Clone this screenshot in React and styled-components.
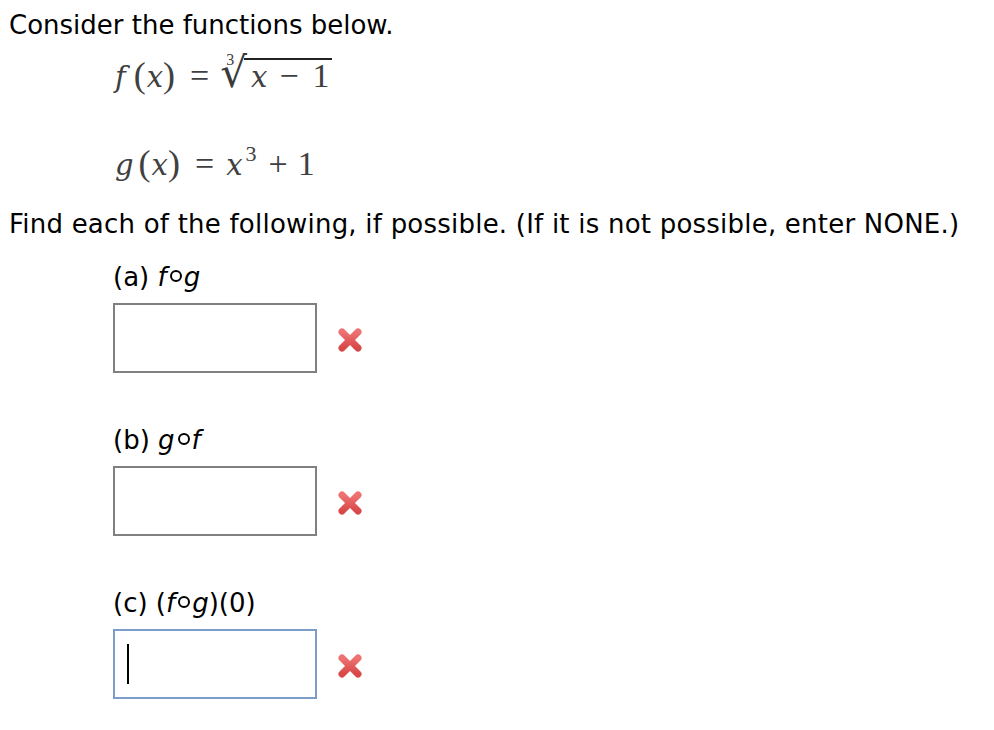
import React from "react";
import styled, { createGlobalStyle } from "styled-components";

const Global = createGlobalStyle`
  html, body { margin: 0; padding: 0; background: #fff; }
  body { font-family: "DejaVu Sans", Verdana, sans-serif; color: #000; }
`;

const Page = styled.div`
  padding: 8px 0 0 9px;
  font-size: 26px;
  line-height: 34px;
`;

const Para = styled.div`
  margin: 0;
`;

const MathBlock = styled.div`
  padding-left: 106px;
  margin-top: 13px;
  display: flex;
  flex-direction: column;
  gap: 50px;
  font-family: "Liberation Serif", "Times New Roman", serif;
  font-size: 34px;
  color: #404040;
  line-height: 36px;
`;

const Eq = styled.div`
  display: flex;
  align-items: baseline;
  white-space: pre;
`;

const I = styled.span`
  font-family: "DejaVu Serif", serif;
  font-style: italic;
  font-size: 29px;
`;

const Paren = styled.span`
  font-size: 36px;
  margin-left: ${(p) => p.$ml || 0}px;
  margin-right: 1px;
`;

const Op = styled.span`
  margin: 0 ${(p) => p.$r || 10}px 0 14px;
`;

const Root = styled.span`
  display: inline-flex;
  align-items: baseline;
  position: relative;
`;

const RootIndex = styled.span`
  position: absolute;
  left: 6px;
  top: -3px;
  font-size: 16px;
  line-height: 16px;
`;

const Radical = styled.span`
  font-family: "DejaVu Serif", serif;
  font-size: 42px;
  color: #3a3a3a;
  margin-right: -3px;
`;

const Radicand = styled.span`
  border-top: 2px solid #222;
  padding: 0 2px 0 7px;
  line-height: 31px;
`;

const Minus = styled.span`
  margin: 0 ${(p) => p.$r || 12}px 0 ${(p) => p.$l || 10}px;
`;

const Sup = styled.span`
  font-size: 22px;
  line-height: 0;
  position: relative;
  top: -14px;
  margin: 0 12px 0 3px;
`;

const Instructions = styled.div`
  margin-top: 24px;
  letter-spacing: 0.22px;
`;

const Parts = styled.div`
  padding-left: 104px;
  margin-top: 19px;
  display: flex;
  flex-direction: column;
  gap: 50px;
`;

const Part = styled.div`
  display: flex;
  flex-direction: column;
  gap: 9px;
`;

const Label = styled.div`
  line-height: 34px;
`;

const Fn = styled.span`
  font-style: italic;
`;

const Ring = styled.span`
  display: inline-block;
  width: 8px;
  height: 8px;
  border: 2.5px solid #000;
  border-radius: 50%;
  margin: 0 2px 0 3px;
  position: relative;
  top: -4px;
`;

const Row = styled.div`
  display: flex;
  align-items: center;
  gap: 19px;
`;

const Box = styled.div`
  box-sizing: border-box;
  width: 204px;
  height: 70px;
  border: 2px solid ${(p) => (p.$focused ? "#7d9dc9" : "#808080")};
  background: #fff;
  display: flex;
  align-items: center;
  padding-left: 12px;
`;

const Caret = styled.span`
  display: block;
  width: 2px;
  height: 40px;
  background: #000;
`;

const Cross = () => (
  <svg width="28" height="28" viewBox="0 0 28 28" style={{ marginTop: 4 }}>
    <defs>
      <linearGradient id="xg" x1="0" y1="0" x2="0" y2="1">
        <stop offset="0" stopColor="#ee7272" />
        <stop offset="1" stopColor="#d84848" />
      </linearGradient>
    </defs>
    <g stroke="url(#xg)" strokeWidth="7" strokeLinecap="round">
      <line x1="6" y1="6" x2="22" y2="22" />
      <line x1="22" y1="6" x2="6" y2="22" />
    </g>
  </svg>
);

const Compose = ({ a, b }) => (
  <Fn>
    {a}
    <Ring aria-label="∘" />
    {b}
  </Fn>
);

export default function App() {
  return (
    <>
      <Global />
      <Page>
        <Para>Consider the functions below.</Para>
        <MathBlock>
          <Eq>
            <I>f</I>
            <Paren $ml={8}>(</Paren>
            <I>x</I>
            <Paren>)</Paren>
            <Op $r={11}>=</Op>
            <Root>
              <RootIndex>3</RootIndex>
              <Radical>√</Radical>
              <Radicand>
                <I>x</I>
                <Minus $l={12} $r={14}>−</Minus>1
              </Radicand>
            </Root>
          </Eq>
          <Eq>
            <I>g</I>
            <Paren $ml={5}>(</Paren>
            <I>x</I>
            <Paren>)</Paren>
            <Op $r={12}>=</Op>
            <I>x</I>
            <Sup>3</Sup>+<Minus>1</Minus>
          </Eq>
        </MathBlock>
        <Instructions>
          Find each of the following, if possible. (If it is not possible, enter NONE.)
        </Instructions>
        <Parts>
          <Part>
            <Label>
              (a) <Compose a="f" b="g" />
            </Label>
            <Row>
              <Box />
              <Cross />
            </Row>
          </Part>
          <Part>
            <Label>
              (b) <Compose a="g" b="f" />
            </Label>
            <Row>
              <Box />
              <Cross />
            </Row>
          </Part>
          <Part>
            <Label>
              (c) (<Compose a="f" b="g" />)(0)
            </Label>
            <Row>
              <Box $focused>
                <Caret />
              </Box>
              <Cross />
            </Row>
          </Part>
        </Parts>
      </Page>
    </>
  );
}
